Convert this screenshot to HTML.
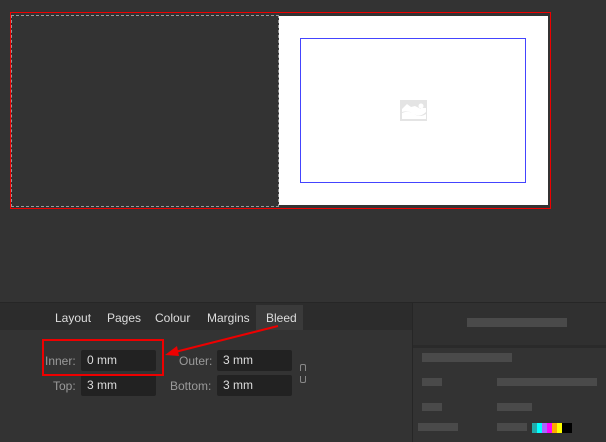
<!DOCTYPE html>
<html><head><style>
body{margin:0;width:606px;height:442px;background:#333;position:relative;overflow:hidden;font-family:"Liberation Sans",sans-serif;}
.a{position:absolute;}
.lbl{position:absolute;color:#9a9a9a;font-size:12px;}
.fld{position:absolute;background:#222;border-radius:2px;color:#ddd;font-size:12px;line-height:21px;padding-left:6px;box-sizing:border-box;}
.tab{position:absolute;top:311px;color:#ddd;font-size:12px;}
.blk{position:absolute;background:#4a4a4a;}
</style></head><body>
<div class="a" style="left:10px;top:12px;width:539px;height:195px;border:1px solid #e00;"></div>
<div class="a" style="left:11px;top:15px;width:266px;height:190px;border:1px dashed #999;"></div>
<div class="a" style="left:279px;top:16px;width:269px;height:189px;background:#fff;"></div>
<div class="a" style="left:300px;top:38px;width:224px;height:143px;border:1px solid #44f;"></div>
<svg class="a" style="left:400px;top:100px" width="28" height="22" viewBox="0 0 28 22"><rect width="27" height="21" fill="#e4e4e4"/><path d="M2 19V9l5-5 4 3 4-1 6 3v-1h5V19z" fill="#fff"/><circle cx="21" cy="6" r="2.5" fill="#fff"/><path d="M2 12q6-2 12 2t12-2v2q-6 4-12 0t-12-1z" fill="#e4e4e4"/></svg>

<div class="a" style="left:0;top:302px;width:606px;height:1px;background:#262626;"></div>
<div class="a" style="left:0;top:303px;width:412px;height:27px;background:#2c2c2c;"></div>
<div class="a" style="left:256px;top:305px;width:47px;height:25px;background:#3a3a3a;"></div>
<div class="tab" style="left:55px">Layout</div>
<div class="tab" style="left:107px">Pages</div>
<div class="tab" style="left:155px">Colour</div>
<div class="tab" style="left:207px">Margins</div>
<div class="tab" style="left:266px">Bleed</div>

<div class="lbl" style="left:45px;top:354px">Inner:</div>
<div class="fld" style="left:81px;top:350px;width:75px;height:21px">0 mm</div>
<div class="lbl" style="left:179px;top:354px">Outer:</div>
<div class="fld" style="left:217px;top:350px;width:75px;height:21px">3 mm</div>
<div class="lbl" style="left:53px;top:379px">Top:</div>
<div class="fld" style="left:81px;top:375px;width:75px;height:21px">3 mm</div>
<div class="lbl" style="left:170px;top:379px">Bottom:</div>
<div class="fld" style="left:217px;top:375px;width:75px;height:21px">3 mm</div>
<div class="a" style="left:300px;top:364px;width:4px;height:6px;border:1px solid #888;border-bottom:none;border-radius:2px 2px 0 0;"></div>
<div class="a" style="left:300px;top:376px;width:4px;height:6px;border:1px solid #888;border-top:none;border-radius:0 0 2px 2px;"></div>
<div class="a" style="left:42px;top:339px;width:118px;height:33px;border:2px solid #e00;"></div>
<svg class="a" style="left:0;top:0" width="606" height="442"><line x1="278" y1="326" x2="175" y2="352" stroke="#e00" stroke-width="2"/><path d="M165 355l12-9 2 10z" fill="#e00"/></svg>

<div class="a" style="left:412px;top:303px;width:1px;height:139px;background:#262626;"></div>
<div class="a" style="left:413px;top:303px;width:193px;height:42px;background:#303030;"></div>
<div class="a" style="left:413px;top:345px;width:193px;height:3px;background:#2a2a2a;"></div>
<div class="blk" style="left:467px;top:318px;width:100px;height:9px;"></div>
<div class="blk" style="left:422px;top:353px;width:90px;height:9px;"></div>
<div class="blk" style="left:422px;top:378px;width:20px;height:8px;"></div>
<div class="blk" style="left:497px;top:378px;width:100px;height:8px;"></div>
<div class="blk" style="left:422px;top:403px;width:20px;height:8px;"></div>
<div class="blk" style="left:497px;top:403px;width:35px;height:8px;"></div>
<div class="blk" style="left:418px;top:423px;width:40px;height:8px;"></div>
<div class="blk" style="left:497px;top:423px;width:30px;height:8px;"></div>
<div class="a" style="left:532px;top:423px;width:40px;height:10px;background:linear-gradient(90deg,#2aa 0 12%,#0ff 12% 25%,#a6f 25% 37%,#f0f 37% 50%,#fa0 50% 62%,#ff0 62% 75%,#000 75%);"></div>
</body></html>
